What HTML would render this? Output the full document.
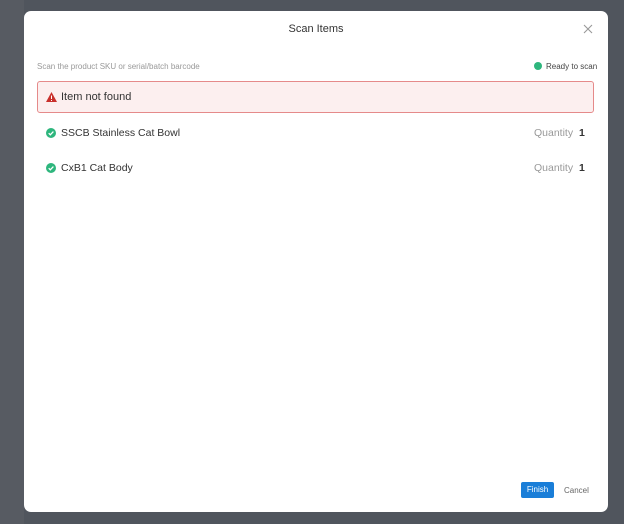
<!DOCTYPE html>
<html><head><style>
body{margin:0;width:624px;height:524px;background:#50555d;font-family:"Liberation Sans",sans-serif;position:relative;overflow:hidden}
.bgl{position:absolute;left:0;top:0;width:24px;height:524px;background:#575b62}
.m{position:absolute;left:24px;top:11px;width:584px;height:501px;background:#fff;border-radius:7px}
.a{position:absolute;white-space:nowrap}
</style></head><body>
<div class="bgl"></div>
<div class="m">
<div class="a" style="left:0;width:584px;top:12px;text-align:center;font-size:11px;color:#333">Scan Items</div>
<svg class="a" style="left:559px;top:13px" width="10" height="10" viewBox="0 0 10 10"><path d="M1 1L9 9M9 1L1 9" stroke="#999" stroke-width="1.1"/></svg>
<div class="a" style="left:13px;top:51px;font-size:8px;color:#999">Scan the product SKU or serial/batch barcode</div>
<div class="a" style="left:510px;top:51px;width:8px;height:8px;border-radius:50%;background:#2eb67d"></div>
<div class="a" style="left:522px;top:51px;font-size:8px;color:#444">Ready to scan</div>
<div class="a" style="left:13px;top:70px;width:555px;height:30px;background:#fcefef;border:1px solid #e58a8a;border-radius:3px"></div>
<svg class="a" style="left:22px;top:81px" width="11" height="10" viewBox="0 0 11 10"><path d="M5.5 0L11 10H0Z" fill="#c9302c"/><rect x="5" y="3.5" width="1" height="3.5" fill="#fff"/><rect x="5" y="8" width="1" height="1" fill="#fff"/></svg>
<div class="a" style="left:37px;top:80px;font-size:11px;color:#333">Item not found</div>
<div class="a" style="left:22px;top:117px;width:10px;height:10px;border-radius:50%;background:#2eb67d"></div>
<svg class="a" style="left:22px;top:117px" width="10" height="10"><path d="M2.7 5.2L4.3 6.8L7.4 3.6" stroke="#fff" stroke-width="1.3" fill="none"/></svg>
<div class="a" style="left:37px;top:116px;font-size:10.5px;color:#333">SSCB Stainless Cat Bowl</div>
<div class="a" style="left:510px;top:116px;font-size:10.5px;color:#999">Quantity <b style="color:#333;margin-left:3px">1</b></div>
<div class="a" style="left:22px;top:152px;width:10px;height:10px;border-radius:50%;background:#2eb67d"></div>
<svg class="a" style="left:22px;top:152px" width="10" height="10"><path d="M2.7 5.2L4.3 6.8L7.4 3.6" stroke="#fff" stroke-width="1.3" fill="none"/></svg>
<div class="a" style="left:37px;top:151px;font-size:10.5px;color:#333">CxB1 Cat Body</div>
<div class="a" style="left:510px;top:151px;font-size:10.5px;color:#999">Quantity <b style="color:#333;margin-left:3px">1</b></div>
<div class="a" style="left:497px;top:471px;width:33px;height:16px;background:#1a7ed8;border-radius:2px;color:#fff;font-size:8px;text-align:center;line-height:16px">Finish</div>
<div class="a" style="left:540px;top:475px;font-size:8px;color:#666">Cancel</div>
</div>
</body></html>
